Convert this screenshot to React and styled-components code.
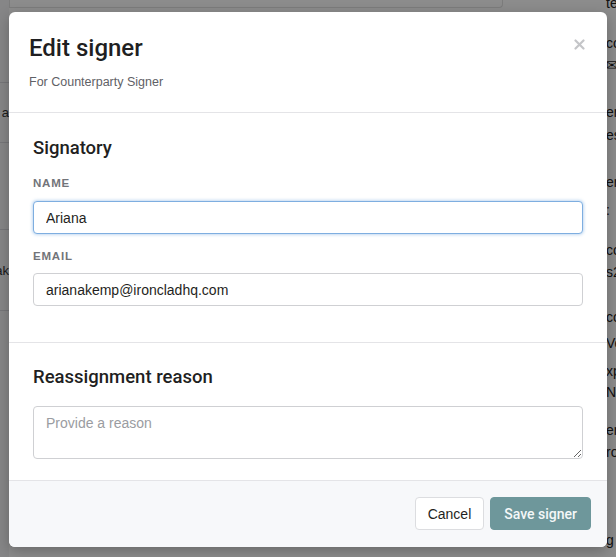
import React from "react";
import styled, { createGlobalStyle } from "styled-components";

const Global = createGlobalStyle`
  html, body { margin: 0; padding: 0; }
  body {
    width: 616px; height: 557px; overflow: hidden;
    font-family: "Liberation Sans", Arial, sans-serif;
    background: #fff;
  }
  * { box-sizing: border-box; }
`;

const Page = styled.div`
  position: relative;
  width: 616px;
  height: 557px;
  display: flex;
  overflow: hidden;
  color: #333;
  font-size: 13px;
`;

const LeftPane = styled.div`
  width: 9px;
  display: flex;
  flex-direction: column;
  background: #f4f4f6;
  overflow: hidden;
  padding-top: 82px;
`;

const LeftRow = styled.div`
  height: ${(p) => p.$h}px;
  border-top: 1px solid #d8d8dc;
  display: flex;
  align-items: center;
  justify-content: flex-end;
  white-space: nowrap;
  font-size: 13px;
`;

const Center = styled.div`
  flex: 1;
  display: flex;
  flex-direction: column;
`;

const TopCard = styled.div`
  height: 8px;
  width: 494px;
  border: 1px solid #e2e2e2;
  border-top: none;
  border-radius: 0 0 4px 0;
`;

const RightPane = styled.div`
  width: 12px;
  display: flex;
  flex-direction: column;
  overflow: hidden;
  padding-left: 2px;
`;

const RightItem = styled.div`
  margin-top: ${(p) => p.$gap}px;
  height: 16px;
  line-height: 16px;
  white-space: nowrap;
  font-size: 14px;
  color: #222;
`;

const Overlay = styled.div`
  position: absolute;
  inset: 0;
  background: rgba(0, 0, 0, 0.45);
  display: flex;
  align-items: flex-start;
  justify-content: center;
  padding-top: 12px;
`;

const Modal = styled.div`
  width: 598px;
  height: 535px;
  background: #fff;
  border-radius: 6px;
  box-shadow: 0 4px 14px rgba(0, 0, 0, 0.25);
  display: flex;
  flex-direction: column;
  overflow: hidden;
  position: relative;
`;

const Header = styled.div`
  padding: 22px 20px 22px;
  border-bottom: 1px solid #e4e4e7;
  display: flex;
  flex-direction: column;
  gap: 12px;
`;

const Title = styled.h2`
  margin: 0;
  font-family: Roboto, "Liberation Sans", sans-serif;
  font-size: 24px;
  line-height: 28px;
  font-weight: 500;
  color: #1f1f22;
`;

const Subtitle = styled.div`
  font-size: 12.5px;
  line-height: 16px;
  color: #5f6166;
`;

const Close = styled.button`
  position: absolute;
  top: 26px;
  right: 22px;
  width: 12px;
  height: 12px;
  padding: 0;
  border: none;
  background: none;
  display: flex;
  align-items: center;
  justify-content: center;
  cursor: pointer;
`;

const Section = styled.div`
  padding: ${(p) => p.$pt}px 24px ${(p) => p.$pb}px;
  border-bottom: 1px solid #e4e4e7;
  display: flex;
  flex-direction: column;
`;

const SectionTitle = styled.h3`
  margin: 0;
  font-family: Roboto, "Liberation Sans", sans-serif;
  font-size: 18.5px;
  line-height: 22px;
  font-weight: 500;
  color: #1f1f22;
`;

const Label = styled.label`
  margin-top: ${(p) => p.$mt}px;
  margin-bottom: ${(p) => p.$mb}px;
  font-size: 11.5px;
  line-height: 14px;
  font-weight: 700;
  letter-spacing: 0.8px;
  color: #727479;
  text-transform: uppercase;
`;

const Input = styled.input`
  width: 100%;
  height: 33px;
  padding: 0 12px;
  border: 1px solid ${(p) => (p.$focused ? "#7eaee0" : "#cfd0d3")};
  border-radius: 4px;
  box-shadow: ${(p) => (p.$focused ? "0 0 3px 1px rgba(120, 170, 225, 0.45)" : "none")};
  font-family: inherit;
  font-size: 14px;
  color: #1f1f22;
  outline: none;
  background: #fff;
`;

const TextArea = styled.textarea`
  margin-top: 18px;
  width: 100%;
  height: 53px;
  padding: 8px 12px;
  border: 1px solid #cfd0d3;
  border-radius: 4px;
  font-family: inherit;
  font-size: 14px;
  line-height: 16px;
  color: #1f1f22;
  outline: none;
  resize: vertical;
  display: block;
  &::placeholder { color: #9a9ca1; }
`;

const Spacer = styled.div`
  flex: 1;
`;

const Footer = styled.div`
  background: #f7f8fa;
  padding: 16px 16px 17px;
  display: flex;
  justify-content: flex-end;
  gap: 6px;
`;

const Button = styled.button`
  height: 33px;
  padding: 0 ${(p) => (p.$primary ? 13 : 12)}px;
  border-radius: 4px;
  border: 1px solid ${(p) => (p.$primary ? "#6e979b" : "#dcdde0")};
  background: ${(p) => (p.$primary ? "#6e979b" : "#fff")};
  color: ${(p) => (p.$primary ? "#f4f8f8" : "#1f1f22")};
  font-family: ${(p) => (p.$primary ? 'Roboto, "Liberation Sans", sans-serif' : "inherit")};
  font-weight: ${(p) => (p.$primary ? 500 : 400)};
  font-size: 14px;
  cursor: pointer;
`;

const leftRows = [
  { h: 61, t: "a" },
  { h: 88, t: "" },
  { h: 82, t: "ak" },
  { h: 250, t: "" },
];

const rightItems = [
  { gap: -5, t: "test" },
  { gap: 24, t: "contract" },
  { gap: 6, t: "✉" },
  { gap: 31, t: "er" },
  { gap: 7, t: "est" },
  { gap: 31, t: "er" },
  { gap: 12, t: ":" },
  { gap: 24, t: "co" },
  { gap: 6, t: "s2" },
  { gap: 29, t: "co" },
  { gap: 10, t: "Ve" },
  { gap: 12, t: "xp" },
  { gap: 5, t: "No" },
  { gap: 22, t: "er" },
  { gap: 6, t: "ro" },
  { gap: 72, t: "g" },
];

export default function App() {
  return (
    <>
      <Global />
      <Page>
        <LeftPane>
          {leftRows.map((r, i) => (
            <LeftRow key={i} $h={r.h}>{r.t}</LeftRow>
          ))}
        </LeftPane>
        <Center>
          <TopCard />
        </Center>
        <RightPane>
          {rightItems.map((r, i) => (
            <RightItem key={i} $gap={r.gap}>{r.t}</RightItem>
          ))}
        </RightPane>
        <Overlay>
          <Modal>
            <Header>
              <Title>Edit signer</Title>
              <Subtitle>For Counterparty Signer</Subtitle>
            </Header>
            <Close aria-label="Close">
              <svg width="11" height="11" viewBox="0 0 11 11">
                <path d="M1.5 1.5 L9.5 9.5 M9.5 1.5 L1.5 9.5" stroke="#c4c5c8" strokeWidth="2.2" strokeLinecap="round" />
              </svg>
            </Close>
            <Section $pt={24} $pb={36}>
              <SectionTitle>Signatory</SectionTitle>
              <Label $mt={17} $mb={11}>Name</Label>
              <Input $focused defaultValue="Ariana" />
              <Label $mt={15} $mb={10}>Email</Label>
              <Input defaultValue="arianakemp@ironcladhq.com" />
            </Section>
            <Section $pt={23} $pb={21}>
              <SectionTitle>Reassignment reason</SectionTitle>
              <TextArea placeholder="Provide a reason" />
            </Section>
            <Spacer />
            <Footer>
              <Button>Cancel</Button>
              <Button $primary>Save signer</Button>
            </Footer>
          </Modal>
        </Overlay>
      </Page>
    </>
  );
}
